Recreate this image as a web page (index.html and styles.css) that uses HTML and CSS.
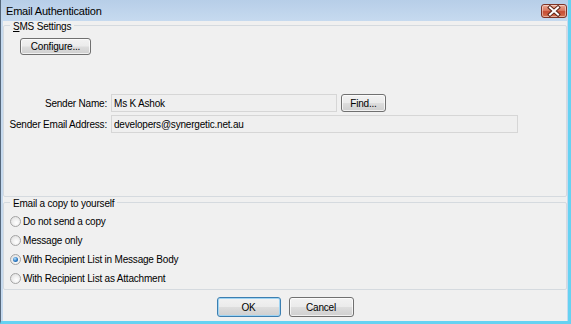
FILE: index.html
```html
<!DOCTYPE html>
<html lang="en">
<head>
    <meta charset="UTF-8">
    <title>Email Authentication</title>
    <link rel="stylesheet" href="styles.css">
</head>
<body>

    <div class="window">
        <header class="titlebar">
            <span class="title">Email Authentication</span>
            <button class="close-btn" title="Close">
                <svg width="26" height="14" viewBox="0 0 26 14">
                    <path d="M9 3.5 L17 10.5 M17 3.5 L9 10.5" stroke="#5a2418" stroke-width="4" stroke-linecap="square"/>
                    <path d="M9 3.5 L17 10.5 M17 3.5 L9 10.5" stroke="#ffffff" stroke-width="2" stroke-linecap="square"/>
                </svg>
            </button>
        </header>

        <main class="client">
            <fieldset class="group group-sms">
                <legend><u>S</u>MS Settings</legend>
                <button class="btn btn-configure">Configure...</button>

                <div class="sender">
                    <div class="sender-row">
                        <label class="sender-label">Sender Name:</label>
                        <input class="field field-name" type="text" value="Ms K Ashok" readonly>
                        <button class="btn btn-find">Find...</button>
                    </div>
                    <div class="sender-row">
                        <label class="sender-label">Sender Email Address:</label>
                        <input class="field field-email" type="text" value="developers@synergetic.net.au" readonly>
                    </div>
                </div>
            </fieldset>

            <fieldset class="group group-copy">
                <legend>Email a copy to yourself</legend>
                <label class="radio"><span class="radio-dot"></span>Do not send a copy</label>
                <label class="radio"><span class="radio-dot"></span>Message only</label>
                <label class="radio"><span class="radio-dot checked"></span>With Recipient List in Message Body</label>
                <label class="radio"><span class="radio-dot"></span>With Recipient List as Attachment</label>
            </fieldset>

            <div class="actions">
                <button class="btn btn-dialog btn-default">OK</button>
                <button class="btn btn-dialog">Cancel</button>
            </div>
        </main>
    </div>

</body>
</html>
```

FILE: styles.css
```css
:root {
    --panel-bg: #f0f0f0;
    --frame-top: #b7cee8;
    --frame-bg: #c6daef;
    --frame-glow: #66d2f2;
    --group-line: #d5dadf;
    --font-ui: 'Liberation Sans', Arial, sans-serif;
}

body {
    margin: 0;
    font-family: var(--font-ui);
    font-size: 10px;
    letter-spacing: -0.2px;
    color: #000;
}

/* --- Window frame --- */
.window {
    width: 571px;
    height: 324px;
    box-sizing: border-box;
    display: flex;
    flex-direction: column;
    padding: 0 1px 0 2px;
    border-left: 1px solid #56687c;
    border-right: 3px solid var(--frame-glow);
    border-bottom: 3px solid var(--frame-glow);
    background: linear-gradient(var(--frame-top), var(--frame-bg) 21px, var(--frame-bg));
}

.titlebar {
    height: 21px;
    flex: none;
    display: flex;
    align-items: flex-start;
    justify-content: space-between;
    padding-left: 3px;
}

.title {
    font-size: 11px;
    line-height: 21px;
    padding-top: 1px;
}

.close-btn {
    width: 26px;
    height: 14px;
    margin-top: 4px;
    padding: 0;
    border: 1px solid #7e3325;
    border-radius: 3px;
    background: linear-gradient(#eaa792, #d97a62 45%, #c64c33 55%, #d3714f);
    box-shadow: inset 0 0 0 1px rgba(255, 255, 255, 0.45);
    display: flex;
    align-items: center;
    justify-content: center;
}

.close-btn svg {
    display: block;
    margin: -1px;
}

/* --- Client area --- */
.client {
    flex: 1;
    display: flex;
    flex-direction: column;
    background: var(--panel-bg);
}

.group {
    margin: 0;
    padding: 0;
    min-width: 0;
    border: 1px solid var(--group-line);
    border-radius: 2px;
}

.group legend {
    margin-left: 6px;
    padding: 3px 3px 0;
    font-size: 10px;
    line-height: 10px;
}

.group-sms {
    flex: 1;
    margin-top: -2px;
}

.group-copy {
    margin-top: -1px;
    padding: 3px 0 1px;
}

/* --- Buttons --- */
.btn {
    font-family: var(--font-ui);
    font-size: 10px;
    letter-spacing: -0.2px;
    color: #000;
    padding: 0;
    border: 1px solid #707070;
    border-radius: 3px;
    background: linear-gradient(#f2f2f2, #ebebeb 48%, #dddddd 52%, #cfcfcf);
    box-shadow: inset 0 0 0 1px rgba(255, 255, 255, 0.7);
}

.btn-configure {
    display: block;
    width: 71px;
    height: 17px;
    margin: 6px 0 0 16px;
}

.sender {
    margin-top: 39px;
    display: flex;
    flex-direction: column;
    gap: 3px;
}

.sender-row {
    display: flex;
    align-items: center;
}

.sender-label {
    width: 103px;
    margin-right: 4px;
    text-align: right;
}

.field {
    height: 18px;
    box-sizing: border-box;
    margin: 0;
    padding: 0 2px;
    border: 1px solid #d6d6d6;
    background: #efefef;
    font-family: var(--font-ui);
    font-size: 10px;
    letter-spacing: -0.2px;
    color: #000;
    outline: none;
}

.field-name {
    width: 226px;
}

.field-email {
    width: 407px;
}

.btn-find {
    width: 45px;
    height: 18px;
    margin-left: 4px;
}

/* --- Radio list --- */
.radio {
    height: 19px;
    display: flex;
    align-items: center;
    gap: 2px;
    padding-left: 6px;
}

.radio-dot {
    width: 11px;
    height: 11px;
    box-sizing: border-box;
    border: 1px solid #a4a4a4;
    border-radius: 50%;
    background: radial-gradient(circle at 60% 65%, #ffffff, #e6e6e6 70%, #d4d4d4);
    display: flex;
    align-items: center;
    justify-content: center;
}

.radio-dot.checked::after {
    content: '';
    width: 5px;
    height: 5px;
    border-radius: 50%;
    background: radial-gradient(circle at 40% 35%, #b9e4ff, #2a78c2 55%, #0d4a8a);
}

/* --- Dialog buttons --- */
.actions {
    flex: none;
    display: flex;
    justify-content: center;
    gap: 8px;
    margin: 7px 0 4px;
}

.btn-dialog {
    width: 65px;
    height: 20px;
}

.btn-default {
    width: 64px;
    border-color: #3c7fb1;
    box-shadow: inset 0 0 0 1px #9fd4f3;
}
```
